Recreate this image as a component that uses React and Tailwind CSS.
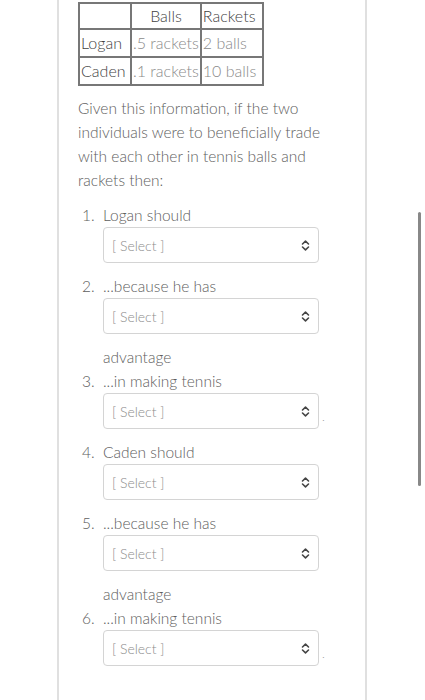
function Chevron() {
  return (
    <svg width="9" height="11" viewBox="0 0 9 11" fill="none" stroke="#444" strokeWidth="1.6" strokeLinecap="round" strokeLinejoin="round">
      <path d="M1.5 4 L4.5 1.2 L7.5 4" />
      <path d="M1.5 7 L4.5 9.8 L7.5 7" />
    </svg>
  );
}

function SelectBox({ period }) {
  return (
    <div className="flex items-end">
      <div className="w-[216px] h-[36px] border border-[#d4d4d4] rounded-[4px] bg-white flex items-center justify-between pl-[8px] pr-[8px]">
        <span className="text-[14px] text-[#8c8c8c] font-light">[ Select ]</span>
        <Chevron />
      </div>
      {period && <span className="ml-[3px] mb-[6px] text-[12px] text-[#999] leading-none">.</span>}
    </div>
  );
}

function Item({ num, label, period, after }) {
  return (
    <div className="flex mb-[11px] last:mb-0">
      <div className="w-[25px] pl-[4px] leading-[24px]">{num}.</div>
      <div className="flex flex-col">
        <div className="leading-[24px]">{label}</div>
        <SelectBox period={period} />
        {after && <div className="leading-[24px] mt-[11px] -mb-[11px]">{after}</div>}
      </div>
    </div>
  );
}

const items = [
  { num: 1, label: 'Logan should' },
  { num: 2, label: '...because he has', after: 'advantage' },
  { num: 3, label: '...in making tennis', period: true },
  { num: 4, label: 'Caden should' },
  { num: 5, label: '...because he has', after: 'advantage' },
  { num: 6, label: '...in making tennis', period: true },
];

export default function App() {
  return (
    <div className="relative w-[425px] h-[700px] overflow-hidden bg-white font-['Lato',sans-serif]">
      <div className="ml-[57px] w-[310px] h-[700px] border-x-2 border-[#e0e0e0] pl-[19px] pt-[2px]">
        {/* tabla */}
        <table className="border-collapse text-[16px] leading-[22px] whitespace-nowrap font-light">
          <tbody>
            <tr className="h-[26px]">
              <td className="border-2 border-[#777] w-[52px]"></td>
              <td className="border-2 border-[#777] w-[69px] text-center text-[#3f3f3f]">Balls</td>
              <td className="border-2 border-[#777] w-[62px] px-[1px] text-[#3f3f3f]">Rackets</td>
            </tr>
            <tr className="h-[28px]">
              <td className="border-2 border-[#777] px-[1px] text-[#3f3f3f]">Logan</td>
              <td className="border-2 border-[#777] px-[1px] text-[#8a8a8a]">.5 rackets</td>
              <td className="border-2 border-[#777] px-[1px] text-[#8a8a8a]">2 balls</td>
            </tr>
            <tr className="h-[28px]">
              <td className="border-2 border-[#777] px-[1px] text-[#3f3f3f]">Caden</td>
              <td className="border-2 border-[#777] px-[1px] text-[#8a8a8a]">.1 rackets</td>
              <td className="border-2 border-[#777] px-[1px] text-[#8a8a8a]">10 balls</td>
            </tr>
          </tbody>
        </table>

        <p className="mt-[10px] text-[15.5px] leading-[24px] text-[#5e5e5e] font-light w-[262px]">
          Given this information, if the two individuals were to beneficially trade with each other in tennis balls and rackets then:
        </p>

        <div className="mt-[11px] text-[15.5px] text-[#5e5e5e] font-light">
          {items.map((it) => (
            <Item key={it.num} {...it} />
          ))}
        </div>
      </div>

      {/* barra de scroll */}
      <div className="absolute left-[418px] top-[212px] w-[3px] h-[274px] bg-[#888] rounded-full" />
    </div>
  );
}
